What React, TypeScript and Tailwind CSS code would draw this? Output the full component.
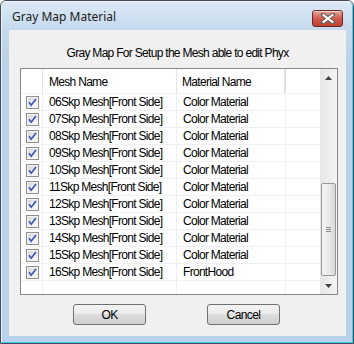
import React from "react";

const rows = [6, 7, 8, 9, 10, 11, 12, 13, 14, 15, 16].map((n) => ({
  mesh: `${String(n).padStart(2, "0")}Skp Mesh[Front Side]`,
  material: n === 16 ? "FrontHood" : "Color Material",
}));

const listFont = { fontFamily: "'Liberation Sans', Arial, sans-serif" };

const CheckBox = () => (
  <svg width="13" height="13" viewBox="0 0 13 13">
    <defs>
      <linearGradient id="cbfill" x1="0" y1="0" x2="1" y2="1">
        <stop offset="0" stopColor="#d8d8d8" />
        <stop offset="1" stopColor="#fbfbfb" />
      </linearGradient>
    </defs>
    <rect x="0.5" y="0.5" width="12" height="12" fill="#f4f4f4" stroke="#8f8f8f" />
    <rect x="2" y="2" width="9" height="9" fill="url(#cbfill)" />
    <path d="M3 6.2 L5.2 9.2 L10 3" fill="none" stroke="#3a58b4" strokeWidth="1.7" />
  </svg>
);

const CloseButton = () => (
  <div className="w-[31px] h-[17px] rounded-[3px] border border-[#6b2a22] bg-gradient-to-b from-[#e3a79d] via-[#cf5a4c] to-[#c0402f] flex items-center justify-center shadow-[inset_0_1px_0_rgba(255,255,255,0.45)]">
    <svg width="14" height="11" viewBox="0 0 14 11">
      <path d="M2 1.5 L12 9.5 M12 1.5 L2 9.5" stroke="#5a5a5a" strokeWidth="4" strokeLinecap="square" />
      <path d="M2.5 2 L11.5 9 M11.5 2 L2.5 9" stroke="#ffffff" strokeWidth="2.2" strokeLinecap="square" />
    </svg>
  </div>
);

const DialogButton = ({ label }: { label: string }) => (
  <button
    className="w-[73px] h-[21px] rounded-[3px] border border-[#707070] bg-[linear-gradient(to_bottom,#f3f3f3_0%,#ebebeb_50%,#dddddd_50%,#cfcfcf_100%)] text-[12px] tracking-[-0.6px] text-black flex items-center justify-center"
    style={listFont}
  >
    {label}
  </button>
);

const ScrollBar = () => (
  <div className="w-[17px] h-full bg-[linear-gradient(to_right,#e6e6e6,#f3f3f3)] flex flex-col items-center">
    <div className="h-[17px] w-full flex items-center justify-center">
      <svg width="7" height="4" viewBox="0 0 7 4">
        <path d="M0 4 L3.5 0 L7 4 Z" fill="#404040" />
      </svg>
    </div>
    <div className="flex-1 w-full flex flex-col justify-end">
      <div className="mx-[1px] mb-[1px] h-[93px] rounded-[2px] border border-[#979797] bg-[linear-gradient(to_right,#f4f4f4,#e8e8e8_60%,#d6d6d6)] flex flex-col items-center justify-center gap-[1px]">
        <div className="w-[5px] h-[1px] bg-[#8a8a8a]" />
        <div className="w-[5px] h-[1px] bg-[#8a8a8a]" />
        <div className="w-[5px] h-[1px] bg-[#8a8a8a]" />
      </div>
    </div>
    <div className="h-[17px] w-full flex items-center justify-center">
      <svg width="7" height="4" viewBox="0 0 7 4">
        <path d="M0 0 L3.5 4 L7 0 Z" fill="#404040" />
      </svg>
    </div>
  </div>
);

export default function App() {
  return (
    <div className="w-[354px] h-[344px] bg-white">
      <div className="w-full h-full rounded-t-[6px] border border-[#434b57] overflow-hidden">
        <div className="w-full h-full flex flex-col border-l border-t border-l-[#e8f0f8] border-t-[#eef4fa] border-r border-b border-r-[#3ccbef] border-b-[#3ccbef] rounded-t-[5px] bg-[linear-gradient(to_bottom,#dbe8f5_0px,#c6d9ee_28px,#b9d1ea_60px,#b9d1ea_100%)]">
          {/* Title bar */}
          <div className="h-[28px] flex items-start justify-between pl-[10px] pr-[9px]">
            <span
              className="mt-[7px] text-[12px] leading-[16px] text-[#1b1b1b]"
              style={{ fontFamily: "'Noto Sans', 'Open Sans', sans-serif" }}
            >
              Gray Map Material
            </span>
            <div className="mt-[8px]">
              <CloseButton />
            </div>
          </div>

          {/* Client area */}
          <div className="flex-1 ml-[7px] mr-[6px] mb-[6px] bg-[#f0f0f0] flex flex-col">
            <div
              className="h-[38px] pt-[16px] text-center text-[12px] tracking-[-0.7px] leading-[14px] text-black"
              style={listFont}
            >
              Gray Map For Setup the Mesh able to edit Phyx
            </div>

            <div className="ml-[11px] w-[318px] h-[227px] border border-[#828790] bg-white flex" style={listFont}>
              <div className="flex-1 flex flex-col text-[12px] tracking-[-0.7px] text-black">
                {/* Header */}
                <div className="h-[25px] flex border-b border-[#f0f0f0]">
                  <div className="w-[22px] border-r border-[#e5e5e5]" />
                  <div className="w-[134px] border-r border-[#e5e5e5] pl-[6px] pt-[1px] flex items-center">Mesh Name</div>
                  <div className="w-[109px] border-r-2 border-[#dedede] pl-[5px] pt-[1px] flex items-center">Material Name</div>
                  <div className="flex-1" />
                </div>
                {/* Rows */}
                {rows.map((r) => (
                  <div key={r.mesh} className="h-[17px] flex border-b border-[#f0f0f0]">
                    <div className="w-[22px] border-r border-[#f0f0f0] flex items-center justify-center pl-[1px]">
                      <CheckBox />
                    </div>
                    <div className="w-[134px] border-r border-[#f0f0f0] pl-[6px] flex items-center whitespace-nowrap">
                      {r.mesh}
                    </div>
                    <div className="w-[109px] border-r border-[#f0f0f0] pl-[6px] flex items-center whitespace-nowrap">
                      {r.material}
                    </div>
                    <div className="flex-1" />
                  </div>
                ))}
                <div className="flex-1 flex">
                  <div className="w-[22px] border-r border-[#f0f0f0]" />
                  <div className="w-[134px] border-r border-[#f0f0f0]" />
                  <div className="w-[109px] border-r border-[#f0f0f0]" />
                  <div className="flex-1" />
                </div>
              </div>
              <ScrollBar />
            </div>

            <div className="mt-[9px] flex pl-[64px] gap-[61px]">
              <DialogButton label="OK" />
              <DialogButton label="Cancel" />
            </div>
          </div>
        </div>
      </div>
    </div>
  );
}
